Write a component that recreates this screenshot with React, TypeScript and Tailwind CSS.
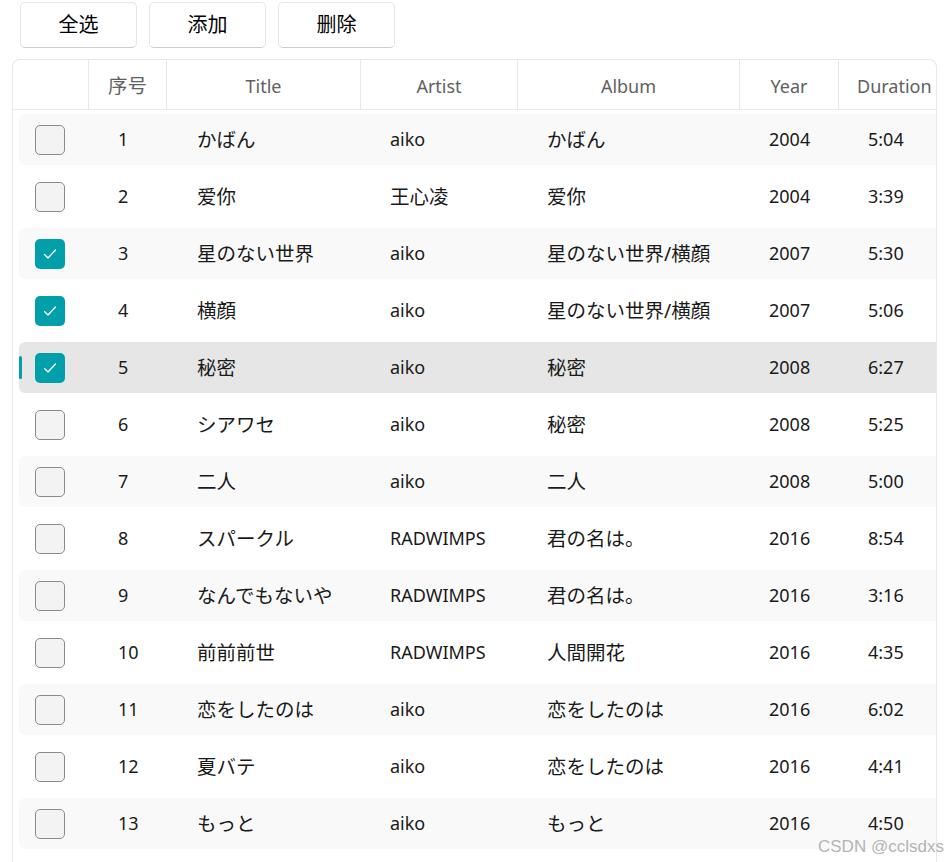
import React from 'react'

type Song = { no: number; title: string; artist: string; album: string; year: number; duration: string; checked?: boolean }

const songs: Song[] = [
  { no: 1, title: 'かばん', artist: 'aiko', album: 'かばん', year: 2004, duration: '5:04' },
  { no: 2, title: '爱你', artist: '王心凌', album: '爱你', year: 2004, duration: '3:39' },
  { no: 3, title: '星のない世界', artist: 'aiko', album: '星のない世界/横顔', year: 2007, duration: '5:30', checked: true },
  { no: 4, title: '横顔', artist: 'aiko', album: '星のない世界/横顔', year: 2007, duration: '5:06', checked: true },
  { no: 5, title: '秘密', artist: 'aiko', album: '秘密', year: 2008, duration: '6:27', checked: true },
  { no: 6, title: 'シアワセ', artist: 'aiko', album: '秘密', year: 2008, duration: '5:25' },
  { no: 7, title: '二人', artist: 'aiko', album: '二人', year: 2008, duration: '5:00' },
  { no: 8, title: 'スパークル', artist: 'RADWIMPS', album: '君の名は。', year: 2016, duration: '8:54' },
  { no: 9, title: 'なんでもないや', artist: 'RADWIMPS', album: '君の名は。', year: 2016, duration: '3:16' },
  { no: 10, title: '前前前世', artist: 'RADWIMPS', album: '人間開花', year: 2016, duration: '4:35' },
  { no: 11, title: '恋をしたのは', artist: 'aiko', album: '恋をしたのは', year: 2016, duration: '6:02' },
  { no: 12, title: '夏バテ', artist: 'aiko', album: '恋をしたのは', year: 2016, duration: '4:41' },
  { no: 13, title: 'もっと', artist: 'aiko', album: 'もっと', year: 2016, duration: '4:50' },
]

const SELECTED = 5

// CJK glyphs render a bit larger than latin in the original
const isCjk = (t: string) => /[^\x00-\x7f]/.test(t)

function Cell({ text }: { text: string }) {
  return <span className={isCjk(text) ? 'text-[19.5px]' : 'text-[18px]'}>{text}</span>
}

function Checkbox({ checked }: { checked?: boolean }) {
  if (checked) {
    return (
      <div className="w-[30px] h-[30px] rounded-[5px] bg-[#009faa] flex items-center justify-center">
        <svg width="16" height="16" viewBox="0 0 16 16" fill="none">
          <path d="M2.5 8.5l3.5 3.5 7.5-8" stroke="white" strokeWidth="1.3" strokeLinecap="round" strokeLinejoin="round" />
        </svg>
      </div>
    )
  }
  return <div className="w-[30px] h-[30px] rounded-[5px] border-[1.5px] border-[#8a8a8a] bg-[#f3f3f3]" />
}

function Button({ label }: { label: string }) {
  return (
    <button className="w-[117px] h-[46px] rounded-[5px] bg-white border border-[#e5e5e5] border-b-[#cfcfcf] text-[20px] text-black flex items-center justify-center">
      {label}
    </button>
  )
}

export default function App() {
  return (
    <div
      className="relative w-[952px] h-[862px] overflow-hidden bg-white"
      style={{ fontFamily: '"Noto Sans", "Noto Sans CJK SC", sans-serif' }}
    >
      <div className="flex gap-3 pl-[20px] pt-[2px]">
        <Button label="全选" />
        <Button label="添加" />
        <Button label="删除" />
      </div>

      <div className="ml-[12px] mt-[11px] w-[925px] border border-b-0 border-[#e8e8e8] rounded-t-lg">
        {/* header */}
        <div className="grid grid-cols-[75px_78px_194px_157px_222px_99px_98px] h-[50px] border-b border-[#e8e8e8] text-[18px] text-[#616161]">
          <div />
          <div className="border-l border-[#e8e8e8] flex items-center justify-center pt-[3px] text-[19.5px]">序号</div>
          <div className="border-l border-[#e8e8e8] flex items-center justify-center pt-[3px]">Title</div>
          <div className="border-l border-[#e8e8e8] flex items-center justify-center pt-[3px]">Artist</div>
          <div className="border-l border-[#e8e8e8] flex items-center justify-center pt-[3px]">Album</div>
          <div className="border-l border-[#e8e8e8] flex items-center justify-center pt-[3px]">Year</div>
          <div className="border-l border-[#e8e8e8] flex items-center pl-[18px] pt-[3px] whitespace-nowrap">Duration</div>
        </div>

        {/* rows */}
        <div className="flex flex-col gap-[6px] pt-[4px] pl-[6px] pb-4">
          {songs.map((s, i) => {
            const selected = s.no === SELECTED
            const bg = selected ? 'bg-[#e6e6e6]' : i % 2 === 0 ? 'bg-[#f9f9f9]' : 'bg-white'
            return (
              <div
                key={s.no}
                className={`relative grid grid-cols-[69px_78px_194px_157px_222px_99px_98px] h-[51px] rounded-l-md items-center text-[18px] text-[#1a1a1a] ${bg}`}
              >
                {selected && <div className="absolute left-0 top-[14px] w-[3px] h-[23px] rounded-full bg-[#009faa]" />}
                <div className="pl-[16px]">
                  <Checkbox checked={s.checked} />
                </div>
                <div className="pl-[30px]">{s.no}</div>
                <div className="pl-[31px] whitespace-nowrap"><Cell text={s.title} /></div>
                <div className="pl-[30px] whitespace-nowrap"><Cell text={s.artist} /></div>
                <div className="pl-[30px] whitespace-nowrap"><Cell text={s.album} /></div>
                <div className="pl-[30px]">{s.year}</div>
                <div className="pl-[30px]">{s.duration}</div>
              </div>
            )
          })}
        </div>
      </div>

      <div
        className="absolute left-[818px] top-[834px] text-[17px] text-[#b4b4b4] whitespace-nowrap"
        style={{ fontFamily: '"Liberation Sans", Arial, sans-serif' }}
      >
        CSDN @cclsdxs
      </div>
    </div>
  )
}
